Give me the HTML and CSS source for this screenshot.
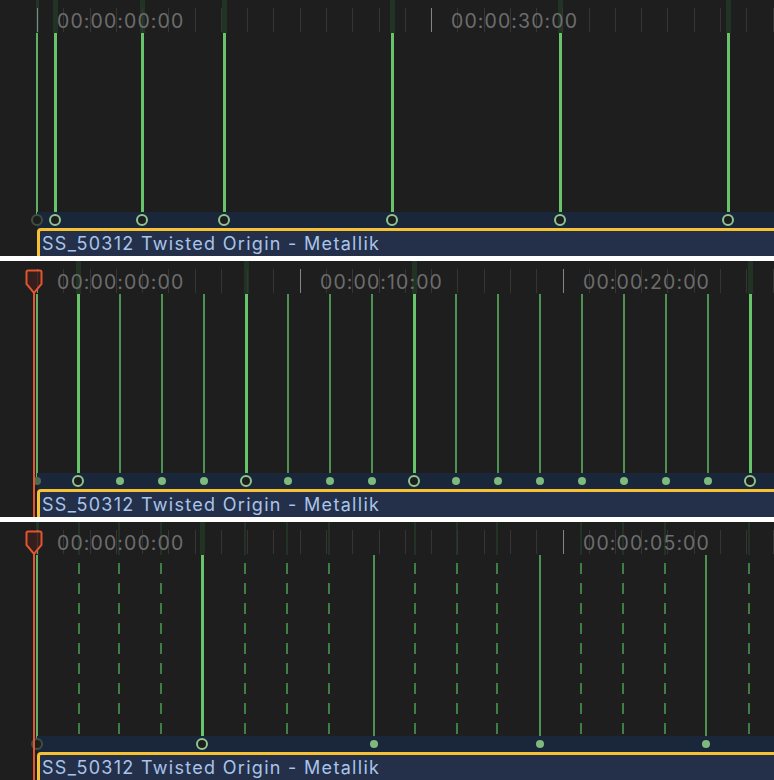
FILE: index.html
```html
<!DOCTYPE html>
<html lang="en">
<head>
  <meta charset="UTF-8" />
  <meta name="viewport" content="width=device-width, initial-scale=1.0"/>
  <title>Timeline markers</title>
  <link rel="stylesheet" href="styles.css">
</head>
<body>

  <div class="timeline">

    <!-- 30 s zoom -->
    <section class="track">
      <div class="ruler"></div>
      <div class="lane"></div>
      <div class="pins"></div>
      <div class="clip">SS_50312 Twisted Origin - Metallik</div>
    </section>

    <!-- 10 s zoom -->
    <section class="track">
      <div class="ruler"></div>
      <div class="lane"></div>
      <div class="pins"></div>
      <div class="clip">SS_50312 Twisted Origin - Metallik</div>
      <div class="playhead">
        <svg width="18" height="26" viewBox="0 0 18 26">
          <path d="M3 1.5 H15 Q16.5 1.5 16.5 3 V15 L9 24 L1.5 15 V3 Q1.5 1.5 3 1.5 Z" />
        </svg>
      </div>
    </section>

    <!-- 5 s zoom -->
    <section class="track">
      <div class="ruler"></div>
      <div class="lane"></div>
      <div class="pins"></div>
      <div class="clip">SS_50312 Twisted Origin - Metallik</div>
      <div class="playhead">
        <svg width="18" height="26" viewBox="0 0 18 26">
          <path d="M3 1.5 H15 Q16.5 1.5 16.5 3 V15 L9 24 L1.5 15 V3 Q1.5 1.5 3 1.5 Z" />
        </svg>
      </div>
    </section>

  </div>

  <script>
    const CLIP_START = 37;   // x where the clip begins
    const TICK = 26.27;      // distance between ruler ticks
    const WIDTH = 774;

    // second track: a beat every 42px, bigger markers on the bar
    const beats = [[37, 'start-dot']];
    for (let x = 78; x <= 750; x += 42) {
      beats.push([x, [78, 246, 414, 750].includes(x) ? 'key' : 'beat']);
    }

    const layout = [
      {
        labels: [[37, '00:00:00:00'], [431, '00:00:30:00']],
        markers: [[37, 'start'], [55, 'key'], [142, 'key'], [224, 'key'], [392, 'key'], [560, 'key'], [728, 'key']]
      },
      {
        labels: [[37, '00:00:00:00'], [300, '00:00:10:00'], [563, '00:00:20:00']],
        markers: beats
      },
      {
        labels: [[37, '00:00:00:00'], [563, '00:00:05:00']],
        markers: [
          [37, 'start'], [79, 'dash'], [119, 'dash'], [161, 'dash'], [202, 'key'],
          [245, 'dash'], [287, 'dash'], [329, 'dash'], [374, 'beat'],
          [415, 'dash'], [457, 'dash'], [497, 'dash'], [540, 'beat'],
          [581, 'dash'], [623, 'dash'], [665, 'dash'], [706, 'beat'], [749, 'dash']
        ]
      }
    ];

    function add(parent, className, x, text) {
      const el = document.createElement('div');
      el.className = className;
      el.style.left = x + 'px';
      if (text) el.textContent = text;
      parent.appendChild(el);
      return el;
    }

    document.querySelectorAll('.track').forEach((track, i) => {
      const data = layout[i];
      const ruler = track.querySelector('.ruler');
      const lane = track.querySelector('.lane');
      const pins = track.querySelector('.pins');

      // marker columns sit under the ticks
      data.markers.forEach(([x, kind]) => {
        if (kind === 'key' || kind === 'dash' || kind === 'start') add(ruler, 'glow ' + kind, x);
      });

      const majors = data.labels.map(l => l[0]);
      for (let x = CLIP_START; x < WIDTH; x += TICK) {
        const px = Math.round(x);
        const major = majors.find(m => Math.abs(m - px) < 3);
        add(ruler, major ? 'tick major' : 'tick', major || px);
      }
      data.labels.forEach(([x, text]) => add(ruler, 'label', x + 20, text));

      data.markers.forEach(([x, kind]) => {
        add(lane, 'line ' + kind, x);
        if (kind === 'key' || kind === 'start') add(pins, 'pin ring ' + kind, x - CLIP_START);
        if (kind === 'beat' || kind === 'start-dot') add(pins, 'pin dot ' + kind, x - CLIP_START);
      });
    });
  </script>

</body>
</html>
```

FILE: styles.css
```css
body {
  margin: 0;
  background-color: #fff;
  font-family: Inter, "Liberation Sans", Arial, sans-serif;
}

.timeline {
  display: flex;
  flex-direction: column;
  gap: 5px;
  width: 774px;
}

.track {
  position: relative;
  height: 256px;
  background-color: #1e1e1e;
  display: grid;
  grid-template-rows: 33px 1fr 16px 28px;
  overflow: hidden;
}

.track:last-child {
  height: 258px;
}

/* ruler */

.ruler {
  position: relative;
}

.tick {
  position: absolute;
  top: 8px;
  height: 24px;
  width: 1px;
  background-color: #353535;
}

.tick.major {
  background-color: #858585;
}

.glow {
  position: absolute;
  top: 0;
  bottom: 0;
  width: 5px;
  margin-left: -2px;
  background-color: #213424;
}

.glow.dash {
  width: 2px;
  margin-left: -1px;
  background-color: #233226;
}

.glow.start {
  width: 3px;
  margin-left: -1px;
  background-color: #22352a;
}

.label {
  position: absolute;
  top: 11px;
  font-size: 19.5px;
  line-height: 20px;
  letter-spacing: 1.1px;
  color: #6d6d6d;
  white-space: nowrap;
}

/* marker lines */

.lane {
  position: relative;
}

.line {
  position: absolute;
  top: 0;
  bottom: -8px;
  width: 2px;
  margin-left: -1px;
  background-color: #4c9352;
}

.line.key {
  width: 3px;
  margin-left: -1px;
  background-color: #68c46a;
}

.line.start,
.line.start-dot {
  background-color: #5fb064;
}

.line.dash {
  bottom: 0;
  background: repeating-linear-gradient(to bottom, transparent 0 8px, #3f7f46 8px 19px, transparent 19px 20px);
}

/* marker pins on the clip */

.pins {
  position: relative;
  margin-left: 37px;
  background-color: #1a2639;
}

.pin {
  position: absolute;
  top: 50%;
  border-radius: 50%;
  transform: translate(-50%, -50%);
}

.pin.ring {
  width: 8px;
  height: 8px;
  border: 2px solid #8ec58e;
  background-color: #1e1e1e;
}

.pin.ring.start {
  border-color: #3e4f40;
}

.pin.dot {
  width: 8px;
  height: 8px;
  background-color: #7eb97e;
}

.pin.dot.start-dot {
  background-color: #4d6a50;
}

.clip {
  margin-left: 37px;
  padding: 1px 0 0 2px;
  border-top: 3px solid #f6c233;
  border-left: 3px solid #f6c233;
  border-top-left-radius: 4px;
  background-color: #243049;
  color: #a9c4e9;
  font-size: 18px;
  line-height: 24px;
  letter-spacing: 1.3px;
  white-space: nowrap;
  overflow: hidden;
}

/* playhead */

.playhead {
  position: absolute;
  top: 8px;
  bottom: 0;
  left: 25px;
  width: 18px;
}

.playhead svg {
  display: block;
}

.playhead path {
  fill: rgba(58, 32, 29, 0.85);
  stroke: #e2552f;
  stroke-width: 2;
}

.playhead::after {
  content: "";
  position: absolute;
  top: 24px;
  bottom: 0;
  left: 8px;
  width: 2px;
  background-color: #e2552f;
}
```
